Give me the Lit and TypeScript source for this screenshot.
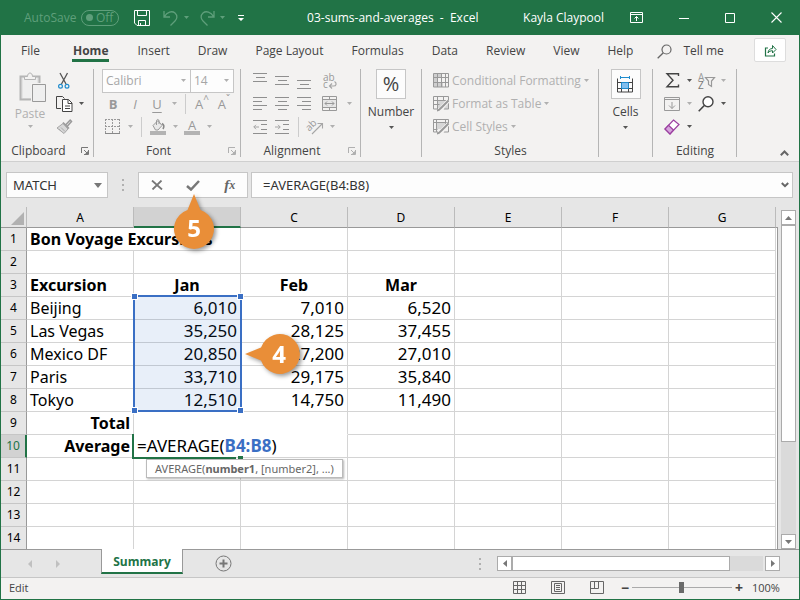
import { LitElement, html, css, svg, nothing } from "lit";
import { customElement, property } from "lit/decorators.js";
import { classMap } from "lit/directives/class-map.js";

const icon = (w: number, h: number, body: unknown) =>
  html`<svg width=${w} height=${h} viewBox="0 0 ${w} ${h}" fill="none" aria-hidden="true">${body}</svg>`;

const caret = (color: string) =>
  icon(5, 3, svg`<path d="M0 0h5L2.5 3z" fill=${color} />`);

const lines = (rows: [number, number, number][]) =>
  icon(15, 16, svg`<g fill="#8f8f8f">${rows.map(([x, y, w]) => svg`<rect x=${x} y=${y} width=${w} height="1" />`)}</g>`);

const I = {
  save: icon(16, 16, svg`<path d="M.5.5h15v15H3L.5 13zM3.500.5v5h9v-5M4.500 15.500v-5h7v5M6.500 13v2.500" stroke="#fff" />`),
  undo: icon(16, 16, svg`<path d="M1 1v6h6M1.500 6.500C4 2 9 .5 12 3c3 2.700 2 6 0 8l-4.500 4.500" stroke="#5f9f7b" stroke-width="1.300" />`),
  redo: icon(16, 16, svg`<path d="M15 1v6H9M14.500 6.500C12 2 7 .5 4 3c-3 2.700-2 6 0 8l4.500 4.500" stroke="#5f9f7b" stroke-width="1.300" />`),
  custom: icon(6, 6, svg`<path d="M0 0h6v1H0zM0 3h6L3 6z" fill="#fff" />`),
  ribbonOpts: icon(13, 11, svg`<path d="M.5.5h12v10H.5zM.5 2.500h12M6.500 9V4.500M4.500 6.500l2-2 2 2" stroke="#fff" />`),
  min: icon(10, 10, svg`<path d="M0 5.500h10" stroke="#fff" />`),
  max: icon(10, 10, svg`<path d="M.5.5h9v9h-9z" stroke="#fff" />`),
  close: icon(11, 11, svg`<path d="M.5.5l10 10M10.500.5l-10 10" stroke="#fff" stroke-width="1.100" />`),
  search: icon(15, 15, svg`<circle cx="9.500" cy="5.500" r="4.500" stroke="#666" stroke-width="1.200" /><path d="M6.300 8.700L.7 14.300" stroke="#666" stroke-width="1.300" />`),
  share: icon(13, 13, svg`<path d="M4 4H1.500v8h9V9.500" stroke="#217346" stroke-width="1.200" /><path d="M4 9c.3-3 2-4.500 4.500-4.500V1.500L12 5.500 8.500 9V6.700C6.500 6.700 5 7.500 4 9z" stroke="#217346" stroke-width="1" />`),
  paste: icon(34, 31, svg`<g transform="translate(6 0)"><path d="M1.500 4.500h19v23h-19z" fill="#e3e3e3" stroke="#b5b5b5" stroke-width="2" /><path d="M4 6h14v20H4z" fill="#efefef" /><path d="M5.500 7.500v-3h3c0-2 1-3.500 2.500-3.500s2.500 1.500 2.500 3.500h3v3z" fill="#f3f2f1" stroke="#b5b5b5" /><path d="M12 11h16v20H12z" fill="#f3f2f1" /><path d="M13.500 12.500h13v17h-13z" fill="#efefef" stroke="#999" /></g>`),
  cut: icon(12, 16, svg`<path d="M2 0l6 11M9.500 0l-6 11" stroke="#555" stroke-width="1.300" /><circle cx="2.500" cy="13.300" r="1.900" stroke="#1e8bcd" stroke-width="1.200" /><circle cx="9" cy="13.300" r="1.900" stroke="#1e8bcd" stroke-width="1.200" />`),
  copy: icon(17, 16, svg`<path d="M5 12.500H.5V.5h6l2 2" stroke="#444" /><path d="M6.500 3.500h6l3.500 3.500v8.500H6.500z" fill="#fff" stroke="#444" /><path d="M12 3.500V7.500h4M9 10h5M9 12.500h5" stroke="#444" />`),
  brush: icon(16, 15, svg`<path d="M1 9l6-4.500 5 5.500-4 4.500z" fill="#d8d8d8" stroke="#a6a6a6" /><path d="M7 3.500l6 6M10 5.500L14.500.8M11.500 7L15.500 2.500 14 .8" stroke="#999" stroke-width="1.500" /><path d="M3 10l3 3M5 8.500l4 4" stroke="#aaa" />`),
  launch: (c: string) => icon(8, 8, svg`<path d="M.5 6V.5H7M3 3l3.500 3.500M7.500 3v4.500H3" stroke=${c} /><path d="M7 4v3H4z" fill=${c} />`),
  borders: icon(16, 16, svg`<path d="M.5 0v14M7.500 0v14M14.500 0v14M0 .5h15M0 7.500h15" stroke="#999" stroke-dasharray="2 1" /><path d="M0 14.500h15" stroke="#888" />`),
  fill: icon(16, 16, svg`<path d="M3 6.500l5-5 4 5-4 4.500H5.500z" fill="#e9e9e9" stroke="#999" /><path d="M6.500 6V2c0-2 2.500-2 2.500 0v3" stroke="#999" /><path d="M12 4.500c2 1 2.500 3 1 5.500" stroke="#888" stroke-width="1.600" /><path d="M0 12h16v4H0z" fill="#b3b3b3" />`),
  wrap: icon(15, 18, svg`<path d="M12.500 9.500c2.500 1.500 2 4.500-1 4.500H7.500M10 11.500L7.500 14l2.500 2.500" stroke="#a6a6a6" stroke-width="1.200" /><text x="1" y="9" class="tiny">ab</text><text x="1" y="16" class="tiny">c</text>`),
  merge: icon(15, 15, svg`<path d="M.5.5h14v14H.5zM.5 3.500h14M.5 11.500h14M7.500.5v3M7.500 11.500v3" stroke="#999" /><path d="M1 4h13v7H1z" fill="#e6e6e6" /><path d="M3 7.500h9M5 5.500l-2 2 2 2M10 5.500l2 2-2 2" stroke="#999" />`),
  outdent: icon(15, 14, svg`<path d="M0 .5h14M8 4.500h6M8 9.500h6M0 13.500h14" stroke="#8f8f8f" /><path d="M.8 7H6M3 4.800L.8 7 3 9.200" stroke="#a6a6a6" />`),
  indent: icon(15, 14, svg`<path d="M0 .5h14M8 4.500h6M8 9.500h6M0 13.500h14" stroke="#8f8f8f" /><path d="M0 7h5.200M3 4.800L5.200 7 3 9.200" stroke="#a6a6a6" />`),
  orient: icon(18, 17, svg`<g transform="rotate(-45 6 8)"><text x="0" y="10" class="tiny">ab</text></g><path d="M6 16L16 6M11.500 5.500H16.500V10.500" stroke="#a6a6a6" stroke-width="1.100" />`),
  cond: icon(16, 15, svg`<path d="M1 1h7v4h-4v5h6v4H1z" fill="#cfcfcf" /><path d="M.5.5h15v13.500H.5zM4.500.5v13.500M8.500.5v13.500M12.500.5v13.500M.5 4.500h15M.5 9.500h15" stroke="#999" />`),
  table: icon(16, 15, svg`<path d="M5 5h10v8H5z" fill="#d6d6d6" /><path d="M.5.5h15v12.500H.5zM4.500.5v12.500M10.500.5v4M.5 4.500h15M.5 8.500h6" stroke="#999" /><path d="M5 14c2.500 0 4.500-1 4.500-3l6-6.500" stroke="#f3f2f1" stroke-width="4" /><path d="M4 14.500c2.500 0 3.500-2 4.500-3L15.500 4.500" stroke="#999" stroke-width="1.900" />`),
  styles: icon(16, 15, svg`<path d="M4 3h9v7H4z" fill="#d6d6d6" /><path d="M.5.5h15v12.500H.5zM3.500.5v12.500M.5 3.500h15M.5 10.500h4M12.500.5v5" stroke="#999" /><path d="M5 14c2.500 0 4.500-1 4.500-3l6-6.500" stroke="#f3f2f1" stroke-width="4" /><path d="M4 14.500c2.500 0 3.500-2 4.500-3L15.500 4.500" stroke="#999" stroke-width="1.900" />`),
  cells: icon(17, 17, svg`<path d="M4 6.500h8v6H4z" fill="#83beec" /><path d="M.5 2.500v13.500h15V2.500M.5 6.500h15M.5 12.500h15M4.500 6v10M11.500 6v10" stroke="#444" /><path d="M4.500 6.500h7v6h-7z" stroke="#1e8bcd" /><path d="M3 1.500h10M3.500 0v3M12.500 0v3" stroke="#1e8bcd" />`),
  sigma: icon(13, 15, svg`<path d="M12.500 3V.7H1l6 6.600-6 6.500h11.500V11.500" stroke="#444" stroke-width="1.400" />`),
  sort: icon(17, 18, svg`<text x="0" y="9" class="tiny">A</text><text x="0" y="17" class="tiny dk">Z</text><path d="M7.500 5.500h9L13.500 9v5.500l-3-2V9z" stroke="#999" stroke-width="1.200" />`),
  down: icon(16, 14, svg`<path d="M.5.5h15v13H.5zM.5 2.500h15" stroke="#999" /><path d="M8 5v6.500M5 8.500l3 3 3-3" stroke="#999" />`),
  find: icon(16, 16, svg`<circle cx="10" cy="5.800" r="5" fill="#fff" stroke="#444" stroke-width="1.400" /><path d="M6.300 9.500L.7 15.200" stroke="#444" stroke-width="1.600" />`),
  eraser: icon(16, 16, svg`<path d="M9.500 1l5.500 4.500-9 9.500-5-5z" fill="#fff" stroke="#9b3fa0" stroke-width="1.200" /><path d="M4.500 6.300l5 4.700-3.500 4-5-5z" fill="#d6a5dc" stroke="#9b3fa0" stroke-width="1.200" />`),
  collapse: icon(9, 6, svg`<path d="M.8 5.200l3.700-3.700 3.700 3.700" stroke="#666" stroke-width="2" />`),
  expand: icon(8, 6, svg`<path d="M.8 1l3.200 3.200L7.200 1" stroke="#666" stroke-width="2" />`),
  x: icon(12, 10, svg`<path d="M1 .5l10 9M10.500.5L1.500 9.500" stroke="#777" stroke-width="1.800" />`),
  check: icon(14, 11, svg`<path d="M1 6l4 3.500L13 1" stroke="#777" stroke-width="2.500" />`),
  dots: icon(3, 12, svg`<path d="M0 0h2v2H0zM0 5h2v2H0zM0 10h2v2H0z" fill="#b0b0b0" />`),
  corner: icon(13, 13, svg`<path d="M13 0v13H0z" fill="#b1b1b1" />`),
  tri: (d: string, c: string, w: number, h: number) => icon(w, h, svg`<path d=${d} fill=${c} />`),
  add: icon(17, 17, svg`<circle cx="8.500" cy="8.500" r="7.500" stroke="#777" /><path d="M8.500 4.500v8M4.500 8.500h8" stroke="#777" stroke-width="2" />`),
  viewGrid: icon(13, 13, svg`<path d="M.5.5h12v12H.5zM4.500.5v12M8.500.5v12M.5 4.500h12M.5 8.500h12" stroke="#666" />`),
  viewPage: icon(14, 13, svg`<path d="M.5.5h13v12H.5zM3.500 2.500h7v8h-7zM5 4.500h4M5 6.500h4M5 8.500h4" stroke="#666" />`),
  viewBreak: icon(14, 13, svg`<path d="M.5.5h13v12H.5zM.5 7.500h8v-7M4.500.5v7" stroke="#666" />`),
};

const TABS = ["File", "Home", "Insert", "Draw", "Page Layout", "Formulas", "Data", "Review", "View", "Help"];

@customElement("step-marker")
class StepMarker extends LitElement {
  static styles = css`
    :host { position: absolute; display: block; z-index: 3; pointer-events: none; }
    svg { display: block; filter: drop-shadow(2px 2px 2px rgba(0, 0, 0, 0.4)); }
    text { font: bold 24px "Open Sans", sans-serif; fill: #fff; text-anchor: middle; }
  `;
  @property() label = "";
  @property() point: "up" | "left" = "up";
  render() {
    return this.point === "up"
      ? html`<svg width="40" height="56" viewBox="0 0 40 56">
          <path d="M20 0l6.500 16A20 20 0 1 1 13.500 16z" fill="#e98e38" />
          <text x="20" y="43">${this.label}</text></svg>`
      : html`<svg width="56" height="42" viewBox="0 0 56 42">
          <path d="M0 21l16-6.500a20 20 0 1 1 0 13z" fill="#e98e38" />
          <text x="34" y="30">${this.label}</text></svg>`;
  }
}

@customElement("excel-ribbon")
class ExcelRibbon extends LitElement {
  static styles = css`
    :host { display: flex; background: #f3f2f1; padding: 4px 0 0; height: 92px; box-sizing: content-box; color: #444; font: 12px/16px "Open Sans", sans-serif; position: relative; }
    button { all: unset; box-sizing: border-box; display: flex; align-items: center; justify-content: center; }
    svg { display: block; flex: none; overflow: visible; }
    .tiny { font: 10px "Open Sans", sans-serif; fill: #999; }
    .dk { fill: #777; }
    .group { box-sizing: border-box; position: relative; display: flex; flex-direction: column; flex: none; }
    .group::after { content: ""; position: absolute; right: 0; top: 0; height: 88px; width: 1px; background: #b5b5b5; }
    .clip { width: 93px; } .font { width: 147px; } .align { width: 120px; } .num { width: 61px; }
    .sty { width: 177px; } .cel { width: 54px; } .edit { width: 84px; }
    .body { height: 74px; display: flex; align-items: flex-start; }
    .rows { display: grid; grid-template-rows: repeat(3, 23px); }
    .row { display: flex; align-items: center; }
    .foot { display: flex; align-items: center; height: 20px; }
    .foot span { flex: 1; text-align: center; }
    .foot button { width: 18px; }
    .c22 { width: 22px; height: 22px; }
    .c12 { width: 12px; height: 22px; }
    .c28 { width: 28px; height: 22px; }
    .vr { width: 1px; height: 20px; background: #ccc; margin: 0 5px; }
    .pastebtn { width: 46px; margin-left: 6px; flex-direction: column; justify-content: flex-start; gap: 3px; height: 70px; padding-top: 3px; color: #b0b0b0; }
    .font .rows, .align .rows { padding-left: 8px; }
    .clip .rows { justify-items: start; }
    select { appearance: none; box-sizing: border-box; height: 24px; margin: 0; padding: 0 3px; border: 1px solid #c6c6c6; border-radius: 0; background: #fdfdfd; color: #a6a6a6; font: 12px/20px "Open Sans", sans-serif; }
    .wrap { position: relative; }
    .wrap svg { position: absolute; right: 5px; top: 10px; }
    .face { width: 89px; } .size { width: 44px; margin-left: -1px; }
    .big { flex-direction: column; justify-content: flex-start; width: 100%; height: 70px; padding-right: 1px; }
    .box { box-sizing: border-box; width: 30px; height: 30px; border: 1px solid #c6c6c6; background: #fcfcfc; display: flex; align-items: center; justify-content: center; font-size: 20px; margin-bottom: 5px; }
    .lbl { margin-bottom: 6px; }
    .sty .rows { padding-left: 11px; }
    .sty button { justify-content: flex-start; gap: 3px; color: #b0b0b0; }
    .edit .rows { padding-left: 8px; }
    .collapse { position: absolute; right: 10px; bottom: 5px; }
    .b { font-weight: 700; } .i { font-style: italic; } .u { text-decoration: underline; text-underline-offset: 3px; }
    .l { font-size: 13px; color: #999; }
    .fc { flex-direction: column; line-height: 12px; }
    .bar { width: 16px; height: 4px; background: #b3b3b3; }
    sup { font-size: 10px; line-height: 12px; align-self: flex-start; }
    .foot { margin-top: 2px; }
  `;
  foot(t: string, c?: string) {
    return html`<div class="foot"><span>${t}</span>${c ? html`<button aria-label="${t} options">${I.launch(c)}</button>` : nothing}</div>`;
  }
  render() {
    const g = caret("#b0b0b0"), d = caret("#555");
    const b = (label: string, body: unknown, cls = "c22") => html`<button class=${cls} aria-label=${label}>${body}</button>`;
    return html`
      <div class="group clip"><div class="body">
        <button class="pastebtn">${I.paste}<span>Paste</span>${g}</button>
        <div class="rows">
          <div class="row">${b("Cut", I.cut)}</div>
          <div class="row">${b("Copy", I.copy)}${b("Copy options", d, "c12")}</div>
          <div class="row">${b("Format painter", I.brush)}</div>
        </div></div>${this.foot("Clipboard", "#777")}</div>
      <div class="group font"><div class="body"><div class="rows">
        <div class="row">
          <span class="wrap"><select class="face" aria-label="Font"><option>Calibri</option></select>${g}</span>
          <span class="wrap"><select class="size" aria-label="Font size"><option>14</option></select>${g}</span>
        </div>
        <div class="row">
          ${b("Bold", "B", "c22 l b")}${b("Italic", "I", "c22 l i")}${b("Underline", "U", "c22 l u")}${b("Underline options", g, "c12")}
          <span class="vr"></span>${b("Grow font", html`A<sup>^</sup>`, "c22 l")}${b("Shrink font", html`A<sup>ˇ</sup>`, "c22 l")}
        </div>
        <div class="row">${b("Borders", I.borders)}${b("Border options", g, "c12")}<span class="vr"></span>${b("Fill colour", I.fill)}${b("Fill options", g, "c12")}
          ${b("Font colour", html`<span>A</span><span class="bar"></span>`, "c22 l fc")}${b("Font colour options", g, "c12")}</div>
      </div></div>${this.foot("Font", "#b0b0b0")}</div>
      <div class="group align"><div class="body"><div class="rows">
        <div class="row">
          ${b("Top align", lines([[0, 0, 14], [3, 4, 9], [0, 8, 14]]))}${b("Middle align", lines([[0, 3, 14], [3, 7, 9], [0, 11, 14]]))}${b("Bottom align", lines([[0, 7, 14], [3, 11, 9], [0, 15, 14]]))}
          ${b("Wrap text", I.wrap, "c28")}</div>
        <div class="row">
          ${b("Align left", lines([[0, 1, 14], [0, 5, 9], [0, 9, 14], [0, 13, 9]]))}${b("Centre", lines([[0, 1, 14], [3, 5, 9], [0, 9, 14], [3, 13, 9]]))}${b("Align right", lines([[0, 1, 14], [5, 5, 9], [0, 9, 14], [5, 13, 9]]))}
          ${b("Merge", I.merge, "c28")}${b("Merge options", g, "c12")}</div>
        <div class="row">${b("Decrease indent", I.outdent)}${b("Increase indent", I.indent)}<span class="vr"></span>${b("Orientation", I.orient)}${b("Orientation options", g, "c12")}</div>
      </div></div>${this.foot("Alignment", "#b0b0b0")}</div>
      <div class="group num"><div class="body"><button class="big"><span class="box">%</span><span class="lbl">Number</span>${d}</button></div></div>
      <div class="group sty"><div class="body"><div class="rows">
        <button>${I.cond}<span>Conditional Formatting</span>${g}</button>
        <button>${I.table}<span>Format as Table</span>${g}</button>
        <button>${I.styles}<span>Cell Styles</span>${g}</button>
      </div></div>${this.foot("Styles")}</div>
      <div class="group cel"><div class="body"><button class="big"><span class="box">${I.cells}</span><span class="lbl">Cells</span>${d}</button></div></div>
      <div class="group edit"><div class="body"><div class="rows">
        <div class="row">${b("AutoSum", I.sigma)}${b("AutoSum options", d, "c12")}${b("Sort and filter", I.sort)}${b("Sort options", g, "c12")}</div>
        <div class="row">${b("Fill", I.down)}${b("Fill options", g, "c12")}${b("Find", I.find)}${b("Find options", d, "c12")}</div>
        <div class="row">${b("Clear", I.eraser)}${b("Clear options", d, "c12")}</div>
      </div></div>${this.foot("Editing")}</div>
      <button class="collapse" aria-label="Collapse ribbon">${I.collapse}</button>`;
  }
}

const ROWS: string[][] = [
  ["Beijing", "6,010", "7,010", "6,520"],
  ["Las Vegas", "35,250", "28,125", "37,455"],
  ["Mexico DF", "20,850", "27,200", "27,010"],
  ["Paris", "33,710", "29,175", "35,840"],
  ["Tokyo", "12,510", "14,750", "11,490"],
];

@customElement("sheet-grid")
class SheetGrid extends LitElement {
  static styles = css`
    :host { display: block; position: relative; flex: 1; min-width: 0; overflow: hidden; background: #e6e6e6; }
    .sheet { position: absolute; inset: 0 3px 0 0; overflow: hidden; }
    .sheet::before { content: ""; position: absolute; box-sizing: border-box; inset: 20px 0 0 26px; background: #fff; border: solid #999; border-width: 1px 1px 0 0; }
    table { position: relative; table-layout: fixed; width: 775px; border-collapse: separate; border-spacing: 0; font: 16px/22px "Noto Sans", sans-serif; color: #000; }
    .hcol { width: 26px; } .dcol { width: 107px; }
    th, td { box-sizing: border-box; padding: 0 3px; border-right: 1px solid #d4d4d4; border-bottom: 1px solid #d4d4d4; height: 23px; white-space: nowrap; text-align: left; }
    td { background: #fff; }
    thead th { height: 21px; background: #e6e6e6; border-color: #999; border-right-color: #bbb; font: 12px/19px "Noto Sans", sans-serif; text-align: center; padding: 0; }
    tbody th { background: #e6e6e6; border-right-color: #999; border-bottom-color: #c6c6c6; font: 12px/22px "Noto Sans", sans-serif; text-align: center; padding: 0; }
    thead .cur { background: #d2d2d2; border-bottom: 2px solid #217346; color: #217346; }
    tbody .cur { background: #d2d2d2; border-right: 2px solid #217346; color: #217346; }
    .corner svg { display: block; margin: 3px 2px 0 auto; }
    .bold { font-weight: 700; } .c { text-align: center; } .r { text-align: right; }
    .n, .editing { font-size: 17px; }
    .noline { border-bottom-color: #fff; }
    .range { position: absolute; box-sizing: border-box; left: 132px; top: 88px; width: 109px; height: 117px; border: 2px solid #3a6fc4; background: rgba(50, 105, 200, 0.11); z-index: 1; }
    .knob { position: absolute; width: 5px; height: 5px; background: #3a6fc4; outline: 1px solid #fff; }
    .tl { left: -3px; top: -3px; } .tr { right: -3px; top: -3px; } .bl { left: -3px; bottom: -3px; } .br { right: -3px; bottom: -3px; }
    .editing { position: relative; }
    .editing::before { content: ""; position: absolute; left: -2px; top: -1px; width: 102px; height: 23px; border: solid #217346; border-width: 0 0 2px 2px; }
    .editing::after { content: ""; position: absolute; left: 104px; top: 21px; width: 5px; height: 4px; background: #217346; }
    .ref { color: #3a6fc4; font-weight: 700; }
    .tip { position: absolute; left: 145px; top: 252px; z-index: 2; border: 1px solid #bbb; background: #fff; padding: 0 8px; font: 11px/17px "Noto Sans", sans-serif; color: #666; box-shadow: 1px 1px 2px rgba(0, 0, 0, 0.3); white-space: nowrap; }
  `;
  render() {
    const blanks = (n: number) => Array.from({ length: n }, () => html`<td></td>`);
    return html`
      <div class="sheet"><table>
        <colgroup><col class="hcol" />${"ABCDEFG".split("").map(() => html`<col class="dcol" />`)}</colgroup>
        <thead><tr><th class="corner">${I.corner}</th>${"ABCDEFG".split("").map((c) => html`<th class=${classMap({ cur: c === "B" })}>${c}</th>`)}</tr></thead>
        <tbody>
          <tr><th>1</th><td class="bold" colspan="2">Bon Voyage Excursions</td>${blanks(5)}</tr>
          <tr><th>2</th>${blanks(7)}</tr>
          <tr><th>3</th><td class="bold">Excursion</td>${["Jan", "Feb", "Mar"].map((m) => html`<td class="bold c">${m}</td>`)}${blanks(3)}</tr>
          ${ROWS.map((r, i) => html`<tr><th>${i + 4}</th>${r.map((v, j) => html`<td class=${classMap({ r: j > 0, n: j > 0 })}>${v}</td>`)}${blanks(3)}</tr>`)}
          <tr><th>9</th><td class="bold r">Total</td><td class="noline" colspan="2"></td>${blanks(4)}</tr>
          <tr><th class="cur">10</th><td class="bold r">Average</td><td class="editing" colspan="2">=AVERAGE(<span class="ref">B4:B8</span>)</td>${blanks(4)}</tr>
          ${[11, 12, 13, 14].map((n) => html`<tr><th>${n}</th>${blanks(7)}</tr>`)}
        </tbody></table>
        <div class="range"><i class="knob tl"></i><i class="knob tr"></i><i class="knob bl"></i><i class="knob br"></i></div>
        <div class="tip">AVERAGE(<b>number1</b>, [number2], ...)</div>
      </div>`;
  }
}

@customElement("app-root")
class AppRoot extends LitElement {
  static styles = css`
    :host { display: flex; flex-direction: column; box-sizing: border-box; min-height: 100vh; border: solid #217346; border-width: 0 1px 1px; background: #e6e6e6; color: #444; font: 12px/16px "Open Sans", sans-serif; position: relative; overflow: hidden; }
    button { all: unset; box-sizing: border-box; display: flex; align-items: center; justify-content: center; }
    svg { display: block; flex: none; }
    .title { display: flex; align-items: center; height: 35px; background: #217346; color: #fff; padding-right: 17px; }
    .auto { color: #5f9f7b; display: flex; align-items: center; gap: 5px; padding-left: 23px; }
    .pill { width: 38px; height: 16px; border: 1px solid #5f9f7b; border-radius: 8px; padding: 0 5px 0 4px; justify-content: space-between; }
    .pill::before { content: ""; width: 7px; height: 7px; border-radius: 4px; background: #5f9f7b; }
    .quick { display: flex; align-items: center; margin-left: 15px; }
    .quick .list { margin: 0 10px 0 5px; }
    .quick .first { margin-right: 13px; }
    .quick .more { margin-left: 3px; }
    .doc { flex: 1; padding-left: 18px; text-align: center; white-space: pre; }
    .win { display: flex; align-items: center; gap: 36px; }
    .user { margin-right: 26px; }
    .tabs { display: flex; align-items: center; height: 30px; background: #f3f2f1; padding: 0 13px 0 20px; gap: 28px; }
    .tab { height: 24px; padding-top: 5px; border-bottom: 3px solid transparent; white-space: nowrap; flex: none; }
    .tab:first-child { margin-right: 4px; }
    .tab.on { padding: 5px 1px 0; font-weight: 700; border-bottom-color: #217346; }
    .tell { gap: 11px; padding-top: 2px; margin-left: -4px; white-space: nowrap; flex: none; }
    .share { margin-left: auto; flex: none; width: 32px; height: 24px; background: #fff; border: 1px solid #ddd; border-radius: 2px; }
    .fbar { display: flex; align-items: center; padding: 10px 6px 9px 5px; border-top: 1px solid #cfcfcf; height: 46px; box-sizing: border-box; }
    .name, .entry, .ops { box-sizing: border-box; height: 26px; border: 1px solid #c6c6c6; background: #fdfdfd; display: flex; align-items: center; }
    .name { width: 102px; padding-right: 5px; }
    input[type="text"] { flex: 1; min-width: 0; border: 0; background: none; padding: 0 0 0 6px; margin: 0; color: #333; font: 13px/16px "Noto Sans", sans-serif; outline: none; }
    .fbar .grip { margin: 0 13px 0 14px; }
    .ops { width: 110px; justify-content: space-around; }
    .fx { font: italic 700 15px/16px "Liberation Serif", serif; color: #666; }
    .fx small { font-size: 12px; }
    .entry { flex: 1; margin-left: 3px; padding-right: 3px; } .entry input { padding-left: 11px; }
    .work { display: flex; flex: 1; min-height: 342px; }
    .vs { display: flex; flex-direction: column; width: 15px; padding-top: 3px; margin-right: 3px; }
    .sb { width: 15px; height: 15px; border: 1px solid #ababab; background: #fff; flex: none; }
    .vs .thumb { box-sizing: border-box; border: 1px solid #ababab; background: #fff; flex: 217; }
    .vs .track { background: #dadada; flex: 93; }
    .sheets { display: flex; height: 29px; box-sizing: border-box; border-top: 1px solid #999; border-bottom: 1px solid #c6c6c6; align-items: center; padding-right: 19px; }
    .nav { display: flex; width: 100px; gap: 24px; padding-left: 27px; box-sizing: border-box; }
    .stab { align-self: flex-start; margin-top: -1px; width: 82px; height: 25px; padding-top: 3px; border: solid #999; border-width: 0 1px 2px; border-bottom-color: #217346; background: #fff; color: #217346; font-weight: 700; }
    .add { margin-left: 32px; }
    .hs { display: flex; width: 283px; height: 15px; }
    .hs .thumb { box-sizing: border-box; border: 1px solid #ababab; background: #fff; flex: 219; }
    .hs .track { background: #dadada; flex: 33; margin-right: 2px; }
    .dots2 { margin-left: auto; margin-right: 15px; }
    .status { display: flex; align-items: center; height: 21px; box-sizing: border-box; background: #f3f2f1; padding: 0 19px 2px 8px; font-size: 11px; }
    .views { display: flex; gap: 25px; margin-left: auto; margin-right: 17px; }
    .zoom { display: flex; align-items: center; gap: 3px; }
    .sign { font-weight: 700; font-size: 14px; }
    input[type="range"] { appearance: none; width: 100px; height: 11px; margin: 0; background: linear-gradient(#aaa, #aaa) center / 100% 1px no-repeat; }
    input[type="range"]::-webkit-slider-thumb { appearance: none; width: 5px; height: 11px; background: #6a6a6a; border-radius: 0; }
    .pct { width: 28px; margin-left: 6px; }
    .five { left: 173px; top: 194px; } .four { left: 244px; top: 333px; }
  `;
  render() {
    const q = caret("#5f9f7b");
    return html`
      <header class="title">
        <div class="auto"><span id="as">AutoSave</span><button class="pill" role="switch" aria-checked="false" aria-labelledby="as">Off</button></div>
        <div class="quick">
          <button class="first" aria-label="Save">${I.save}</button>
          <button aria-label="Undo">${I.undo}</button><button class="list" aria-label="Undo list">${q}</button>
          <button aria-label="Redo">${I.redo}</button><button class="list" aria-label="Redo list">${q}</button>
          <button class="more" aria-label="Customise toolbar">${I.custom}</button>
        </div>
        <div class="doc">03-sums-and-averages  -  Excel</div>
        <div class="user">Kayla Claypool</div>
        <div class="win"><button aria-label="Ribbon display options">${I.ribbonOpts}</button><button aria-label="Minimise">${I.min}</button><button aria-label="Maximise">${I.max}</button><button aria-label="Close">${I.close}</button></div>
      </header>
      <nav class="tabs">
        ${TABS.map((t) => html`<button class=${classMap({ tab: true, on: t === "Home" })}>${t}</button>`)}
        <button class="tell">${I.search}<span>Tell me</span></button>
        <button class="share" aria-label="Share">${I.share}</button>
      </nav>
      <excel-ribbon></excel-ribbon>
      <div class="fbar">
        <div class="name"><input type="text" aria-label="Name box" value="MATCH" />${I.tri("M0 0h8L4 5z", "#777", 8, 5)}</div>
        <span class="grip">${I.dots}</span>
        <div class="ops"><button aria-label="Cancel">${I.x}</button><button aria-label="Enter">${I.check}</button><button class="fx" aria-label="Insert function">f<small>x</small></button></div>
        <div class="entry"><input type="text" aria-label="Formula" value="=AVERAGE(B4:B8)" />${I.expand}</div>
      </div>
      <div class="work">
        <sheet-grid></sheet-grid>
        <div class="vs"><button class="sb" aria-label="Scroll up">${I.tri("M3.500 0L7 4H0z", "#777", 7, 4)}</button><div class="thumb"></div><div class="track"></div><button class="sb" aria-label="Scroll down">${I.tri("M0 0h7L3.500 4z", "#777", 7, 4)}</button></div>
      </div>
      <div class="sheets">
        <div class="nav"><button aria-label="Previous sheet">${I.tri("M4 0v8L0 4z", "#c0c0c0", 4, 8)}</button><button aria-label="Next sheet">${I.tri("M0 0v8l4-4z", "#c0c0c0", 4, 8)}</button></div>
        <button class="stab">Summary</button>
        <button class="add" aria-label="New sheet">${I.add}</button>
        <span class="dots2">${I.dots}</span>
        <div class="hs"><button class="sb" aria-label="Scroll left">${I.tri("M4 0v7L0 3.500z", "#777", 4, 7)}</button><div class="thumb"></div><div class="track"></div><button class="sb" aria-label="Scroll right">${I.tri("M0 0v7l4-3.500z", "#777", 4, 7)}</button></div>
      </div>
      <footer class="status"><span>Edit</span>
        <div class="views"><button aria-label="Normal view">${I.viewGrid}</button><button aria-label="Page layout view">${I.viewPage}</button><button aria-label="Page break view">${I.viewBreak}</button></div>
        <div class="zoom"><button class="sign" aria-label="Zoom out">−</button><input type="range" aria-label="Zoom" min="0" max="100" value="50" /><button class="sign" aria-label="Zoom in">+</button><span class="pct">100%</span></div>
      </footer>
      <step-marker class="five" label="5" point="up"></step-marker>
      <step-marker class="four" label="4" point="left"></step-marker>`;
  }
}
